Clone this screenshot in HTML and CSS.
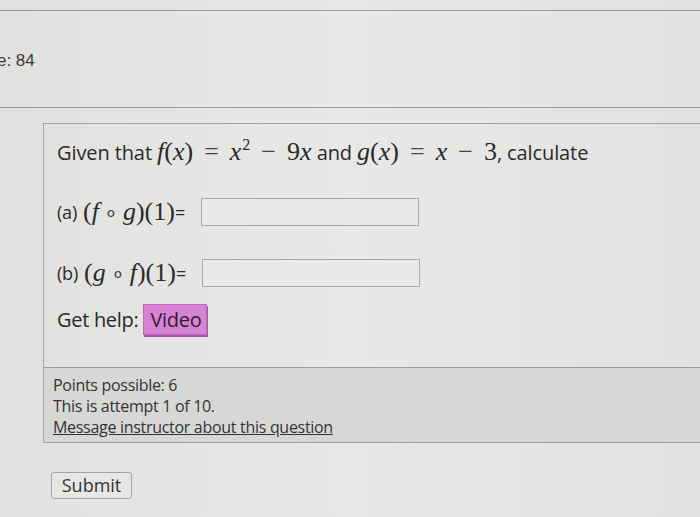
FILE: index.html
```html
<!DOCTYPE html>
<html>
<head>
<meta charset="utf-8">
<link rel="stylesheet" href="styles.css">
</head>
<body>
<div class="page">
  <div class="topbar">
    <span class="score">Score: 84</span>
  </div>
  <div class="question">
    <div class="qbody">
      <p class="given">Given that <span class="m"><i>f</i>(<i>x</i>)<span class="op">=</span><i>x</i><sup>2</sup><span class="op">−</span>9<i>x</i></span> and <span class="m"><i>g</i>(<i>x</i>)<span class="op">=</span><i>x</i><span class="op">−</span>3</span>, calculate</p>
      <div class="part">(a) <span class="m pm">(<i>f</i><span class="op">∘</span><i>g</i>)(1)</span>= <span class="field"></span></div>
      <div class="part">(b) <span class="m pm">(<i>g</i><span class="op">∘</span><i>f</i>)(1)</span>= <span class="field"></span></div>
      <div class="help">Get help: <span class="video">Video</span></div>
    </div>
    <div class="info">
      <div>Points possible: 6</div>
      <div>This is attempt 1 of 10.</div>
      <div class="link">Message instructor about this question</div>
    </div>
  </div>
  <div class="submitrow"><span class="submit">Submit</span></div>
</div>
</body>
</html>
```

FILE: styles.css
```css
html, body {
  margin: 0;
  padding: 0;
  width: 700px;
  height: 517px;
  overflow: hidden;
  background: #e3e3e1;
  font-family: "Open Sans", "Noto Sans", sans-serif;
  color: #2a2a2a;
}
.page {
  width: 700px;
  height: 517px;
  padding-top: 10px;
  box-sizing: border-box;
  background: linear-gradient(90deg, #e1e1df 0%, #e8e8e6 50%, #e2e2e0 100%);
}
.topbar {
  height: 96px;
  border-top: 1px solid #9a9a9a;
  border-bottom: 1px solid #9a9a9a;
  display: flex;
  align-items: center;
}
.score {
  font-family: "Liberation Sans", Arial, sans-serif;
  font-size: 17px;
  margin-left: -38px;
  margin-top: 3px;
  color: #3a3a3a;
}
.question {
  margin-top: 15px;
  margin-left: 43px;
  width: 680px;
  border-top: 1px solid #a6a6a6;
  border-left: 1px solid #a6a6a6;
  border-bottom: 1px solid #a0a0a0;
}
.qbody {
  height: 243px;
  padding-left: 13px;
  box-sizing: border-box;
  padding-top: 11px;
}
.given {
  margin: 0;
  font-size: 20px;
  line-height: 34px;
  height: 34px;
  letter-spacing: -0.1px;
  white-space: nowrap;
}
.m {
  font-family: "Liberation Serif", "Times New Roman", serif;
  font-size: 26px;
  letter-spacing: 0;
}
.m i {
  font-style: italic;
}
.m sup {
  font-size: 16px;
  line-height: 0;
  vertical-align: 10px;
  margin-left: 1px;
}
.op {
  margin: 0 11px;
  color: #444;
}
.part {
  display: flex;
  align-items: center;
  font-size: 18px;
  margin-top: 29px;
  height: 28px;
  letter-spacing: -0.2px;
}
.part + .part {
  margin-top: 33px;
}
.pm {
  margin-left: 6px;
  font-size: 26px;
}
.pm .op {
  margin: 0 5px;
  font-size: 22px;
}
.field {
  display: inline-block;
  width: 218px;
  height: 28px;
  box-sizing: border-box;
  border: 1px solid #a9a9a9;
  background: #e9e9e7;
  margin-left: 16px;
}
.help {
  display: flex;
  align-items: center;
  font-size: 20px;
  margin-top: 17px;
  letter-spacing: -0.3px;
}
.video {
  display: inline-block;
  margin-left: 5px;
  background: #d882d6;
  border: 1px solid #b86cb6;
  box-shadow: 1px 2px 0 #a55aa3;
  padding: 1px 5px 1px 6px;
  color: #2b1f2b;
  font-size: 20px;
  line-height: 27px;
}
.info {
  height: 75px;
  box-sizing: border-box;
  border-top: 1px solid #9c9c9c;
  background: #d7d8d6;
  padding: 7px 0 0 9px;
  font-size: 16px;
  line-height: 21px;
  letter-spacing: -0.3px;
  color: #333;
}
.link {
  text-decoration: underline;
}
.submitrow {
  margin-top: 29px;
  margin-left: 51px;
}
.submit {
  display: inline-block;
  width: 81px;
  height: 27px;
  box-sizing: border-box;
  border: 1px solid #a4a4a4;
  border-radius: 3px;
  background: #e6e6e4;
  text-align: center;
  font-size: 18px;
  line-height: 25px;
  color: #333;
}
```
